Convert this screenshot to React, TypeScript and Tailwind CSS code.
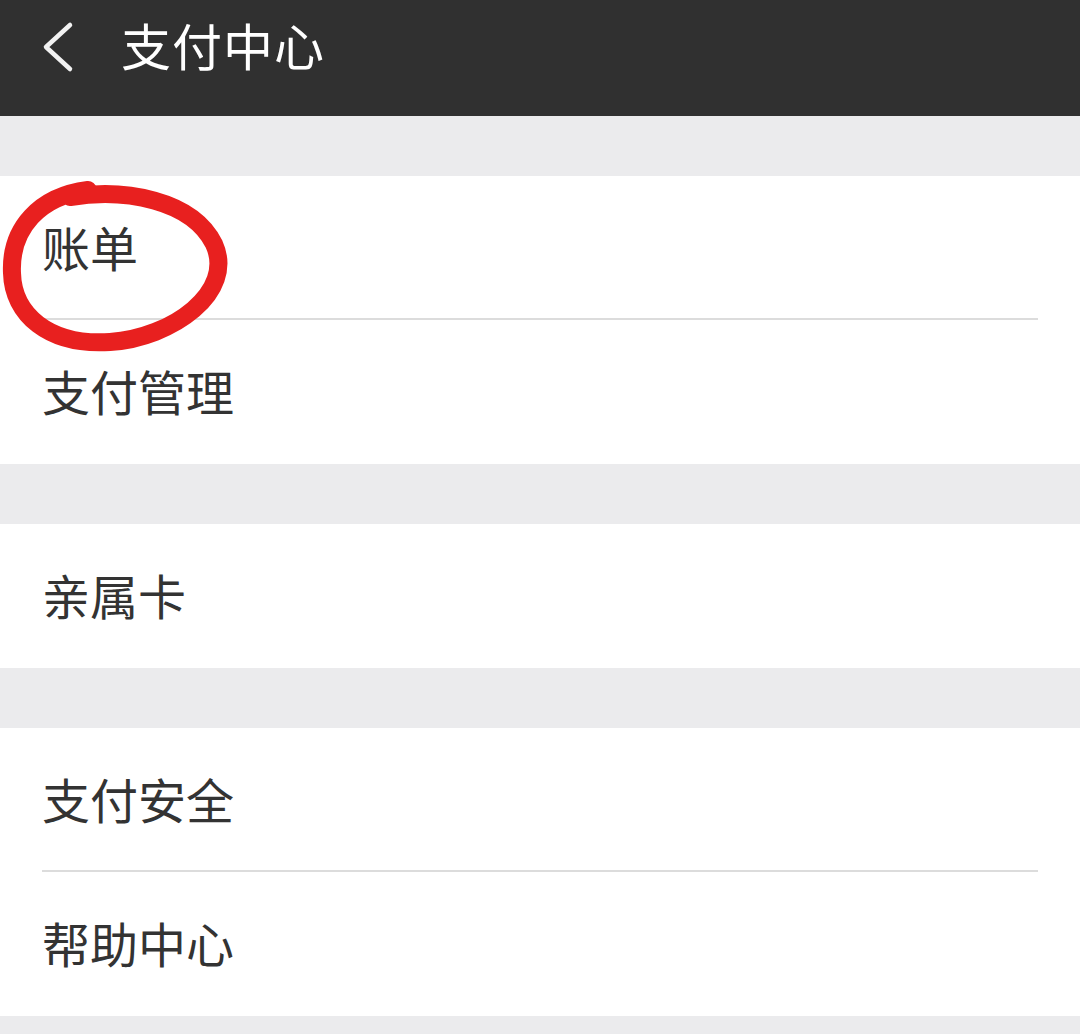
import React from "react";

const font = { fontFamily: '"Noto Sans CJK SC", "Noto Sans", sans-serif' };

function Row({ label, divider }: { label: string; divider?: boolean }) {
  return (
    <div className="relative bg-white h-[144px] flex items-center pl-[42px]">
      <span className="text-[48px] leading-none text-[#333333] font-normal -mt-[4px]">{label}</span>
      {divider && (
        <div className="absolute left-[42px] right-[42px] bottom-0 h-[2px] bg-[#dcdcdc]" />
      )}
    </div>
  );
}

export default function App() {
  return (
    <div className="relative w-[1080px] h-[1034px] bg-[#ebebed] overflow-hidden" style={font}>
      <div className="h-[116px] bg-[#303030] flex items-center">
        <svg width="120" height="116" viewBox="0 0 120 116" className="shrink-0">
          <polyline points="70,25 46,47 70,69" fill="none" stroke="#f2f2f2" strokeWidth="4.5" strokeLinecap="round" strokeLinejoin="round" />
        </svg>
        <span className="text-white text-[50px] leading-none -mt-[28px] ml-[1px] tracking-[1px]">支付中心</span>
      </div>
      <div className="h-[60px]" />
      <Row label="账单" divider />
      <Row label="支付管理" />
      <div className="h-[60px]" />
      <Row label="亲属卡" />
      <div className="h-[60px]" />
      <Row label="支付安全" divider />
      <Row label="帮助中心" />
      <svg className="absolute left-0 top-0 pointer-events-none" width="1080" height="1034" viewBox="0 0 1080 1034">
        <path
          d="M 70 197 C 125 188, 192 200, 214 244 C 236 292, 172 338, 110 342 C 48 346, 13 314, 12 273 C 10 228, 40 196, 88 190"
          fill="none"
          stroke="#e8201f"
          strokeWidth="18"
          strokeLinecap="round"
        />
      </svg>
    </div>
  );
}
